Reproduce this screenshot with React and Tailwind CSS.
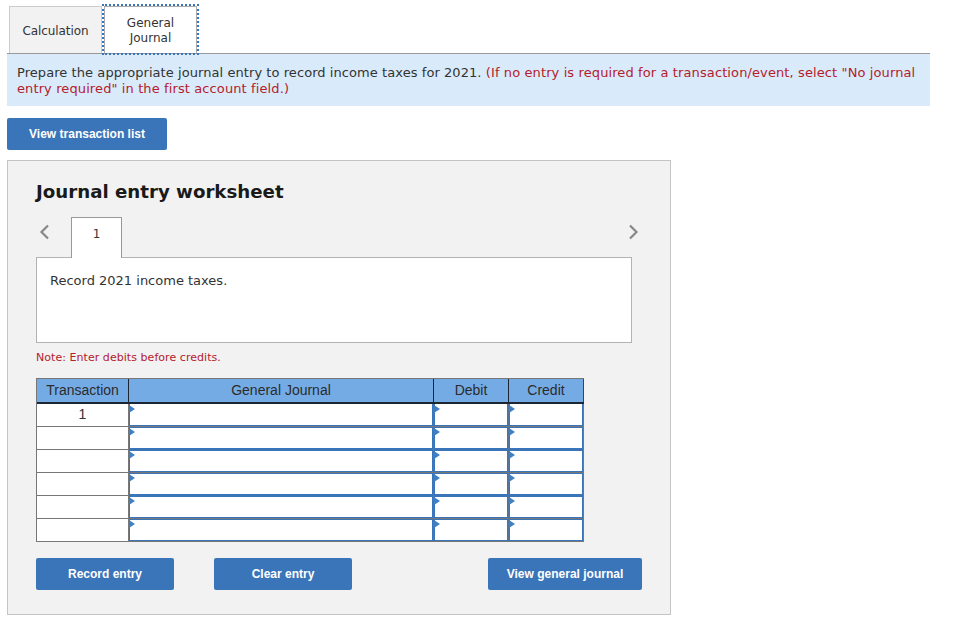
import React from 'react'

const sans = "font-['DejaVu_Sans',Verdana,sans-serif]"
const arial = "font-['Liberation_Sans',Arial,sans-serif]"

const Btn = ({ className, children }) => (
  <button className={`h-8 rounded-[2px] bg-[#3a75b9] text-white text-[12px] font-bold ${arial} ${className}`}>{children}</button>
)

// the separators under the rows come out gray and blue in turn
const InputCell = ({ row, last }) => (
  <div className={`relative h-[23px] border-r border-b ${last ? 'border-r-[#777]' : 'border-r-[#54759c]'} ${row % 2 === 0 || row === 5 ? 'border-b-[#777]' : 'border-b-[#3a75b9]'}`}>
    <div className={`h-full border border-[#3a75b9] bg-white ${row === 0 ? 'border-t-0' : ''}`} />
    <svg className="absolute left-0 top-[1px]" width="6" height="8" viewBox="0 0 6 8">
      <path d="M0 0L6 4L0 8Z" fill="#3f7fc4" />
    </svg>
  </div>
)

const rows = ['1', '', '', '', '', '']

export default function App() {
  return (
    <div className={`w-[966px] h-[630px] bg-white pl-[7px] pt-[6px] text-[#333] ${sans} overflow-hidden`}>
      <div className="flex w-[923px] h-[48px] border-b border-[#999]">
        <div className="ml-[2px] w-[93px] h-[47px] flex items-center justify-center pt-[2px] border border-b-0 border-[#ccc] bg-[#f2f2f2] text-[12px] tracking-[-0.1px]">Calculation</div>
        <div className="relative z-10 ml-[2px] w-[93px] h-[47px] flex items-center justify-center pt-[2px] text-center bg-white text-[12px] leading-[15px] border border-b-0 border-[#aaa] outline-2 outline-dotted outline-[#3a75b9]">
          General<br />Journal
        </div>
      </div>
      <div className="w-[923px] h-[52px] bg-[#d9ebfa] px-[10px] pt-[11px] text-[13px] leading-4 tracking-[0.067px] text-[#333]">
        Prepare the appropriate journal entry to record income taxes for 2021. <span className="text-[#b5202c] tracking-[0.11px]">(If no entry is required for a transaction/event, select "No journal entry required" in the first account field.)</span>
      </div>
      <Btn className="mt-3 w-40 block">View transaction list</Btn>
      <div className="mt-[10px] w-[664px] h-[455px] bg-[#f2f2f2] border border-[#c4c4c4] pl-[28px] pt-[19px]">
        <h2 className="text-[18.2px] leading-6 font-bold text-[#1a1a1a]">Journal entry worksheet</h2>
        <div className="mt-[13px] flex items-start w-[596px] relative z-10">
          <svg className="mt-[7px] ml-[3px]" width="11" height="16" viewBox="0 0 11 16" fill="none">
            <path d="M9 1.5L2.5 8L9 14.5" stroke="#888" strokeWidth="2.2" />
          </svg>
          <div className="ml-[21px] w-[51px] h-[41px] bg-white border border-b-0 border-[#999] flex justify-center pt-[8px] text-[12px] leading-4">1</div>
          <svg className="ml-auto mt-[7px] mr-[-7px]" width="11" height="16" viewBox="0 0 11 16" fill="none">
            <path d="M2 1.5L8.5 8L2 14.5" stroke="#888" strokeWidth="2.2" />
          </svg>
        </div>
        <div className="-mt-px w-[596px] h-[86px] bg-white border border-[#b3b3b3] pl-[13px] pt-[15px] text-[13px] leading-4">
          Record 2021 income taxes.
        </div>
        <p className="mt-[8px] text-[11px] leading-[14px] tracking-[0.05px] text-[#b5202c]">Note: Enter debits before credits.</p>
        <div className={`mt-[13px] w-[548px] border-t border-l border-[#777] ${arial} text-[14px]`}>
          <div className="grid grid-cols-[92px_305px_75px_75px] h-[25px] bg-[#75abe5] border-b-2 border-b-[#1c2733] text-center leading-[22px] text-[#2b2b2b]">
            <div className="border-r border-[#1c2733]">Transaction</div>
            <div className="border-r border-[#1c2733]">General Journal</div>
            <div className="border-r border-[#1c2733]">Debit</div>
            <div className="border-r border-[#444]">Credit</div>
          </div>
          {rows.map((r, i) => (
            <div key={i} className="grid grid-cols-[92px_305px_75px_75px]">
              <div className="h-[23px] bg-white border-r border-b border-[#777] text-center leading-[21px]">{r}</div>
              <InputCell row={i} />
              <InputCell row={i} />
              <InputCell row={i} last />
            </div>
          ))}
        </div>
        <div className="mt-4 flex w-[606px]">
          <Btn className="w-[138px]">Record entry</Btn>
          <Btn className="w-[138px] ml-10">Clear entry</Btn>
          <Btn className="w-[154px] ml-auto">View general journal</Btn>
        </div>
      </div>
    </div>
  )
}
